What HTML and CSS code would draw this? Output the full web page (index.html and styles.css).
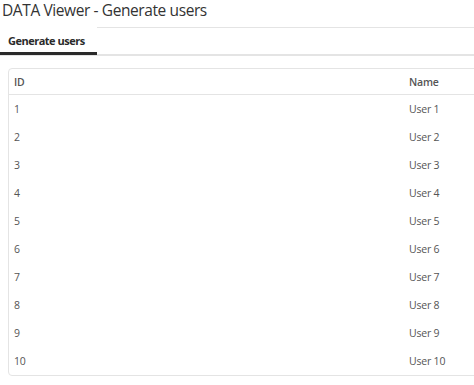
FILE: index.html
```html
<!DOCTYPE html>
<html>
<head>
<meta charset="utf-8">
<link rel="stylesheet" href="styles.css">
</head>
<body>
<h1 class="title">DATA Viewer - Generate users</h1>
<div class="tabs">
  <div class="tab active">Generate users</div>
</div>
<div class="content">
  <div class="card">
    <table class="grid">
      <thead>
        <tr><th class="col-id">ID</th><th class="col-name">Name</th></tr>
      </thead>
      <tbody>
        <tr><td>1</td><td>User 1</td></tr>
        <tr><td>2</td><td>User 2</td></tr>
        <tr><td>3</td><td>User 3</td></tr>
        <tr><td>4</td><td>User 4</td></tr>
        <tr><td>5</td><td>User 5</td></tr>
        <tr><td>6</td><td>User 6</td></tr>
        <tr><td>7</td><td>User 7</td></tr>
        <tr><td>8</td><td>User 8</td></tr>
        <tr><td>9</td><td>User 9</td></tr>
        <tr><td>10</td><td>User 10</td></tr>
      </tbody>
    </table>
  </div>
</div>
</body>
</html>
```
FILE: styles.css
```css
html, body {
  margin: 0;
  padding: 0;
  background: #fff;
  overflow: hidden;
}
body {
  font-family: "Open Sans", "Noto Sans", sans-serif;
  color: #555;
  width: 474px;
}
.title {
  margin: 0;
  padding: 1px 0 0 2px;
  height: 26px;
  font-size: 15.5px;
  font-weight: 400;
  line-height: 19px;
  letter-spacing: -0.4px;
  color: #333;
  white-space: nowrap;
}
.tabs {
  display: flex;
  height: 26px;
  border-top: 1px solid #e4e4e4;
  border-bottom: 2px solid #e4e4e4;
}
.tab {
  margin-top: -1px;
  margin-bottom: -2px;
  padding: 0 12px 0 8px;
  height: 25px;
  line-height: 28px;
  background: #fff;
  font-size: 11px;
  font-weight: 700;
  letter-spacing: -0.5px;
  color: #2a2a2a;
  border-bottom: 3px solid #2a2a2a;
  white-space: nowrap;
}
.content {
  padding: 12px 0 0 8px;
}
.card {
  width: 520px;
  border: 1px solid #e4e4e4;
  border-radius: 4px;
  overflow: hidden;
}
.grid {
  width: 100%;
  border-collapse: collapse;
  font-size: 10.5px;
  letter-spacing: -0.2px;
}
.grid th {
  height: 25px;
  text-align: left;
  font-weight: 600;
  color: #555;
  padding: 0 0 0 5px;
  border-bottom: 1px solid #e4e4e4;
}
.grid td {
  height: 28px;
  padding: 0 0 0 5px;
  color: #555;
}
.col-id {
  width: 390px;
}
```
